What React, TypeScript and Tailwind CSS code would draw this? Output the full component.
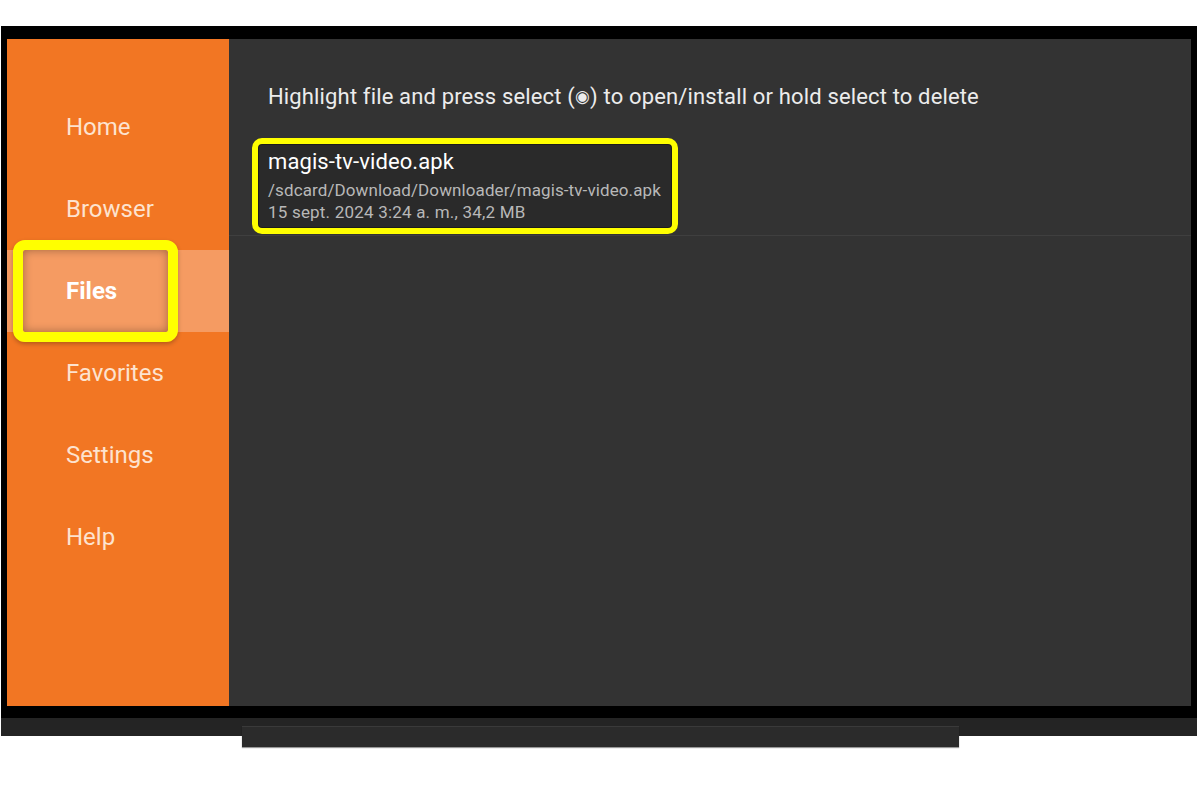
import React from "react";

const items = ["Home", "Browser", "Files", "Favorites", "Settings", "Help"];

function Sidebar() {
  return (
    <div className="w-[222px] shrink-0 bg-[#f27623] pt-[47px]">
      {items.map((label) =>
        label === "Files" ? (
          <div key={label} className="relative h-[82px] bg-[#f59b62] flex items-center pl-[59px]">
            {/* highlight marker */}
            <div className="absolute left-[6px] top-[-10px] w-[165px] h-[102px] rounded-[12px] border-[10px] border-[#ffff00] shadow-[inset_0_0_10px_rgba(0,0,0,0.35),0_2px_4px_rgba(0,0,0,0.25)]" />
            <span className="relative text-[24px] font-bold text-white">{label}</span>
          </div>
        ) : (
          <div key={label} className="h-[82px] flex items-center pl-[59px]">
            <span className="text-[24px] text-[#fde3cf]">{label}</span>
          </div>
        )
      )}
    </div>
  );
}

function FileList() {
  return (
    <div className="flex-1 bg-[#333333]">
      <div className="pl-[39px] pt-[41px] h-[99px] text-[22px] tracking-[0.15px] text-[#ececec]">
        Highlight file and press select (<span className="text-[17px] align-[2px]">◉</span>) to open/install or hold select to delete
      </div>
      <div className="border-b border-[#3f3f3f] pb-[1px]">
        <div className="ml-[23px] w-[426px] rounded-[10px] border-[6px] border-[#ffff00] bg-[#1c1c1c] p-[1px]">
          <div className="bg-[#2a2a2a] rounded-[3px] pl-[9px] pr-[4px] pt-[6px] pb-[6px] leading-none whitespace-nowrap">
            <div className="text-[22px] tracking-[0.1px] text-white">magis-tv-video.apk</div>
            <div className="mt-[9px] text-[17px] tracking-[0.1px] text-[#b8b8b8]">/sdcard/Download/Downloader/magis-tv-video.apk</div>
            <div className="mt-[5px] text-[17px] tracking-[0.2px] text-[#b8b8b8]">15 sept. 2024 3:24 a. m., 34,2 MB</div>
          </div>
        </div>
      </div>
    </div>
  );
}

export default function App() {
  return (
    <div className="w-[1200px] h-[800px] bg-white overflow-hidden font-['Roboto','Liberation_Sans',sans-serif]">
      <div className="ml-[1px] mt-[26px] w-[1196px] bg-[#242424] pb-[18px]">
        <div className="bg-black pt-[13px] pl-[6px] pr-[6px] pb-[12px]">
          <div className="flex h-[667px]">
            <Sidebar />
            <FileList />
          </div>
        </div>
      </div>
      <div className="relative ml-[242px] -mt-[10px] w-[717px] h-[21px] bg-[#2b2b2b] border-t border-[#3a3a3a] shadow-[0_1px_1px_rgba(0,0,0,0.4)]" />
    </div>
  );
}
